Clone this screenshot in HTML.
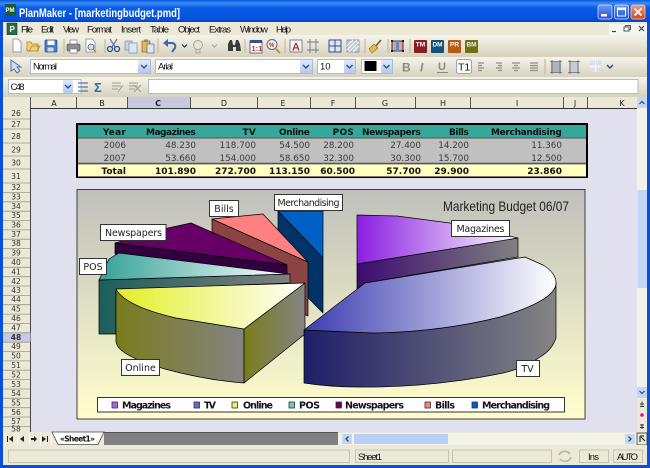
<!DOCTYPE html>
<html><head><meta charset="utf-8"><title>PlanMaker</title>
<style>
html,body{margin:0;padding:0;background:#0a4fd8}
svg{display:block}
.u{font-family:"Liberation Sans",sans-serif}
.d{font-family:"DejaVu Sans",sans-serif}
.rh{font:7.5px "DejaVu Sans",sans-serif;fill:#333;text-anchor:middle}
.ch{font:8px "DejaVu Sans",sans-serif;fill:#222;text-anchor:middle}
.m{font:9.5px "Liberation Sans",sans-serif;fill:#111}
.tb{font:bold 9px "DejaVu Sans",sans-serif;fill:#111;text-anchor:end}
.tr{font:8.8px "DejaVu Sans",sans-serif;fill:#3a3a3a;text-anchor:end}
.lb{font:9.5px "DejaVu Sans",sans-serif;fill:#222;text-anchor:middle}
.lg{font:bold 9.5px "DejaVu Sans",sans-serif;fill:#111}
.cb{fill:#fff;stroke:#a9bcd8;stroke-width:1}
.in{stroke:#000;stroke-width:.7;stroke-linejoin:round}
</style></head><body>
<svg width="650" height="468" viewBox="0 0 650 468" xmlns="http://www.w3.org/2000/svg">
<defs>
<linearGradient id="title" x1="0" y1="0" x2="0" y2="1"><stop offset="0" stop-color="#0a5ae0"/><stop offset=".15" stop-color="#3a8cf6"/><stop offset=".35" stop-color="#0c5ce6"/><stop offset=".9" stop-color="#0550dc"/><stop offset="1" stop-color="#0340b8"/></linearGradient>
<linearGradient id="bar" x1="0" y1="0" x2="0" y2="1"><stop offset="0" stop-color="#f6f4ea"/><stop offset="1" stop-color="#d6d2be"/></linearGradient>
<linearGradient id="chart" x1="0" y1="0" x2="0" y2="1"><stop offset="0" stop-color="#c0c0bc"/><stop offset="1" stop-color="#ffffcc"/></linearGradient>
<linearGradient id="btn" x1="0" y1="0" x2="0" y2="1"><stop offset="0" stop-color="#6f9cf2"/><stop offset="1" stop-color="#1f50d8"/></linearGradient>
<linearGradient id="cls" x1="0" y1="0" x2="0" y2="1"><stop offset="0" stop-color="#f09a80"/><stop offset="1" stop-color="#d8401c"/></linearGradient>
<linearGradient id="drop" x1="0" y1="0" x2="0" y2="1"><stop offset="0" stop-color="#dfe9fb"/><stop offset="1" stop-color="#b4c9f0"/></linearGradient>
<linearGradient id="g1" x1="0" y1="0" x2="1" y2="0"><stop offset="0" stop-color="#8a1ee0"/><stop offset="1" stop-color="#fff"/></linearGradient>
<linearGradient id="g1s" x1="0" y1="0" x2="1" y2="0"><stop offset="0" stop-color="#3c0a70"/><stop offset="1" stop-color="#808080"/></linearGradient>
<linearGradient id="g2" x1="0" y1="0" x2="1" y2="0"><stop offset="0" stop-color="#3c3cb0"/><stop offset="1" stop-color="#fff"/></linearGradient>
<linearGradient id="g2s" x1="0" y1="0" x2="1" y2="0"><stop offset="0" stop-color="#1e1e68"/><stop offset="1" stop-color="#848484"/></linearGradient>
<linearGradient id="g3" x1="0" y1="0" x2="1" y2="0"><stop offset="0" stop-color="#e4ee28"/><stop offset="1" stop-color="#fff"/></linearGradient>
<linearGradient id="g3s" x1="0" y1="0" x2="1" y2="0"><stop offset="0" stop-color="#7a7c1c"/><stop offset="1" stop-color="#848484"/></linearGradient>
<linearGradient id="g4" x1="0" y1="0" x2="1" y2="0"><stop offset="0" stop-color="#34a298"/><stop offset="1" stop-color="#fff"/></linearGradient>
<linearGradient id="g4s" x1="0" y1="0" x2="1" y2="0"><stop offset="0" stop-color="#1c5e5c"/><stop offset="1" stop-color="#808080"/></linearGradient>
</defs>

<!-- window frame -->
<rect width="650" height="468" fill="#0a4fd8"/>
<rect width="650" height="22" fill="url(#title)"/>
<rect x="3" y="22" width="644" height="443" fill="#ece9d8"/>

<!-- title -->
<rect x="5" y="4" width="11" height="12" fill="#1c5c30"/>
<text x="5.500" y="12" font-family="Liberation Sans" font-weight="bold" font-size="6" fill="#fff">PM</text>
<text x="19" y="17" class="u" font-weight="bold" font-size="12" fill="#fff" textLength="161" lengthAdjust="spacingAndGlyphs">PlanMaker - [marketingbudget.pmd]</text>
<rect x="598" y="5" width="14" height="14" rx="2" fill="url(#btn)" stroke="#dfe8fb" stroke-width=".7"/>
<rect x="601" y="14" width="6" height="2.500" fill="#fff"/>
<rect x="614.500" y="5" width="14" height="14" rx="2" fill="url(#btn)" stroke="#dfe8fb" stroke-width=".7"/>
<rect x="617.500" y="8" width="8" height="8" fill="none" stroke="#fff" stroke-width="1"/><rect x="617.500" y="8" width="8" height="2" fill="#fff"/>
<rect x="631" y="5" width="14" height="14" rx="2" fill="url(#cls)" stroke="#f4dcd0" stroke-width=".7"/>
<path d="M634.500 8.500l7 7m0-7l-7 7" stroke="#fff" stroke-width="1.800"/>

<!-- menu -->
<rect x="3" y="22" width="644" height="13" fill="#ece9d8"/>
<rect x="7" y="23" width="10" height="12" fill="#2a6c44" stroke="#123" stroke-width=".5"/>
<text x="9.500" y="32" class="u" font-weight="bold" font-size="8" fill="#fff">P</text>
<text x="21" y="32.500" class="m" textLength="12">File</text>
<text x="41" y="32.500" class="m" textLength="13">Edit</text>
<text x="63" y="32.500" class="m" textLength="16">View</text>
<text x="87" y="32.500" class="m" textLength="25">Format</text>
<text x="121" y="32.500" class="m" textLength="20">Insert</text>
<text x="150" y="32.500" class="m" textLength="19">Table</text>
<text x="178" y="32.500" class="m" textLength="22">Object</text>
<text x="209" y="32.500" class="m" textLength="22">Extras</text>
<text x="240" y="32.500" class="m" textLength="28">Window</text>
<text x="276" y="32.500" class="m" textLength="15">Help</text>
<rect x="609" y="24" width="38" height="11" fill="#f6f5ee"/>
<path d="M612 31.500h4" stroke="#444" stroke-width="1.200"/>
<path d="M624 27h5v4h-5zM625.500 27v-1.500h5v4h-1.500" fill="none" stroke="#555"/>
<path d="M639 26l5 5m0-5l-5 5" stroke="#444" stroke-width="1.200"/>

<!-- toolbar 1 -->
<rect x="3" y="35" width="644" height="22" fill="url(#bar)"/>
<path d="M13 39h5l3 3v10h-8z" fill="#fff" stroke="#7a8aa8" stroke-width=".8"/>
<path d="M27 51v-9h4l1 2h6v7zM29 51l3-5h8l-3 5z" fill="#f4d070" stroke="#a08030" stroke-width=".7"/>
<rect x="45" y="40" width="12" height="12" rx="1" fill="#4a78c8" stroke="#2a4a90" stroke-width=".7"/><rect x="47.500" y="40.500" width="7" height="4.500" fill="#fff"/><rect x="47.500" y="47.500" width="6" height="4" fill="#d0d8e8"/>
<path d="M64 39v14" stroke="#b8b4a0"/>
<rect x="67" y="44" width="13" height="7" rx="1.500" fill="#8a8e90" stroke="#444" stroke-width=".6"/><rect x="70" y="40" width="7" height="4" fill="#fff" stroke="#666" stroke-width=".6"/><rect x="70" y="49" width="7" height="4" fill="#fff" stroke="#666" stroke-width=".6"/>
<path d="M86 39h6l3 3v10h-9z" fill="#fff" stroke="#7a8aa8" stroke-width=".8"/><circle cx="91" cy="47" r="3" fill="#cfe0f0" stroke="#555" stroke-width=".8"/><path d="M93 49l3 3" stroke="#c09020" stroke-width="1.400"/>
<path d="M105 39v14" stroke="#b8b4a0"/>
<circle cx="110" cy="49" r="2.500" fill="none" stroke="#2a4a90" stroke-width="1.300"/><circle cx="117" cy="49" r="2.500" fill="none" stroke="#2a4a90" stroke-width="1.300"/><path d="M112 47l5-8m-2 8l-5-8" stroke="#6a7a90" stroke-width="1.200"/>
<rect x="125" y="41" width="7" height="9" fill="#c8d4e8" stroke="#7a8aa8" stroke-width=".7"/><rect x="129" y="43" width="8" height="10" fill="#dde6f4" stroke="#7a8aa8" stroke-width=".7"/>
<rect x="142" y="41" width="8" height="11" fill="#e4b850" stroke="#8a6a20" stroke-width=".7"/><rect x="144" y="39.500" width="4" height="2.500" fill="#888"/><rect x="147" y="44" width="7" height="9" fill="#dde6f4" stroke="#5a6a90" stroke-width=".7"/>
<path d="M158 39v14" stroke="#b8b4a0"/>
<path d="M165 43h7a3.500 3.500 0 0 1 3 5l-3 4" fill="none" stroke="#3a68b0" stroke-width="2"/><path d="M168 39l-5 4 5 4z" fill="#3a68b0"/>
<path d="M182 44.500l2.500 2.500 2.500-2.500" fill="none" stroke="#234" stroke-width="1.200"/>
<circle cx="198" cy="45" r="4.500" fill="#e8e6d6" stroke="#a8a694"/><path d="M196 49v4h4v-4" fill="none" stroke="#a8a694"/>
<path d="M212 44.500l2.500 2.500 2.500-2.500" fill="none" stroke="#b0ae9c" stroke-width="1.200"/>
<path d="M228 44l2-4h2l1 5h2l1-5h2l2 4 1 7h-5v-4h-3v4h-5z" fill="#3a3a3a"/>
<path d="M245 39v14" stroke="#b8b4a0"/>
<rect x="250" y="41" width="12" height="12" fill="#fff" stroke="#33528c" stroke-width=".8"/><rect x="250" y="40" width="12" height="3" fill="#33528c"/><text x="251.500" y="51" class="u" font-weight="bold" font-size="7.500" fill="#c03020">1:1</text>
<circle cx="272" cy="44.500" r="5" fill="#e8eef6" stroke="#606878"/><text x="269" y="47" class="u" font-size="6" font-weight="bold" fill="#c03020">%</text><path d="M276 49l4 4" stroke="#b09030" stroke-width="1.800"/>
<path d="M285 39v14" stroke="#b8b4a0"/>
<rect x="290" y="40" width="12" height="12" fill="#f8f8f8" stroke="#5a6a90" stroke-width=".8"/><text x="292" y="50.500" class="u" font-weight="bold" font-size="11" fill="#c82828">A</text>
<path d="M310 39v14M316 39v14M307 42h12M307 50h12" stroke="#6a7a90" stroke-width=".9"/>
<rect x="329" y="40" width="12" height="12" fill="#dfe6f2" stroke="#33528c"/><path d="M335 40v12M329 46h12" stroke="#33528c"/>
<rect x="347" y="40" width="12" height="12" fill="#c0cce0" stroke="#7a8ab0" stroke-width=".8"/><path d="M347 46l6-6m-6 10l10-10m-8 12l10-10m-6 10l6-6" stroke="#fff" stroke-width=".9"/>
<path d="M365 39v14" stroke="#b8b4a0"/>
<path d="M381 40l-6 7" stroke="#7a5a20" stroke-width="1.600"/><path d="M374 44l-5 5 3 4 6-5z" fill="#e8b840" stroke="#8a6a20" stroke-width=".6"/>
<path d="M388 39v14" stroke="#b8b4a0"/>
<rect x="392" y="41" width="11" height="10" fill="#d8a0a0" stroke="#333"/><rect x="396" y="41" width="3" height="10" fill="#6a88c0"/><path d="M391 40h2v2h-2zM402 40h2v2h-2zM391 50h2v2h-2zM402 50h2v2h-2z" fill="#222"/>
<path d="M410 39v14" stroke="#b8b4a0"/>
<rect x="414" y="40" width="13" height="13" rx="1" fill="#8c1c24"/><rect x="431" y="40" width="13" height="13" rx="1" fill="#14507c"/><rect x="448" y="40" width="13" height="13" rx="1" fill="#b85a14"/><rect x="465" y="40" width="13" height="13" rx="1" fill="#6e7010"/>
<g class="u" font-weight="bold" font-size="6.500" fill="#fff" text-anchor="middle"><text x="420.500" y="46.500">TM</text><text x="437.500" y="46.500">DM</text><text x="454.500" y="46.500">PR</text><text x="471.500" y="46.500" fill="#eee">BM</text></g>

<!-- toolbar 2 -->
<rect x="3" y="57" width="644" height="20" fill="url(#bar)"/>
<path d="M11 60l0 11 3-2 3 4 3-2-3-4h4z" fill="#cfe0f6" stroke="#4a6a9a" stroke-width=".9"/>
<rect class="cb" x="30.500" y="59.500" width="120" height="14"/><rect x="138" y="60" width="12" height="13" rx="1" fill="url(#drop)"/><path d="M141 65l3 3 3-3" fill="none" stroke="#2a4a80" stroke-width="1.300"/>
<text x="33" y="69.500" class="m" textLength="24">Normal</text>
<rect class="cb" x="155.500" y="59.500" width="157" height="14"/><rect x="300" y="60" width="12" height="13" rx="1" fill="url(#drop)"/><path d="M303 65l3 3 3-3" fill="none" stroke="#2a4a80" stroke-width="1.300"/>
<text x="158" y="69.500" class="m" textLength="15">Arial</text>
<rect class="cb" x="317.500" y="59.500" width="38" height="14"/><rect x="344" y="60" width="11" height="13" rx="1" fill="url(#drop)"/><path d="M346.500 65l3 3 3-3" fill="none" stroke="#2a4a80" stroke-width="1.300"/>
<text x="320" y="69.500" class="m">10</text>
<rect class="cb" x="361.500" y="59.500" width="31" height="14"/><rect x="364.500" y="61" width="12" height="10" fill="#000"/><rect x="381" y="60" width="11" height="13" rx="1" fill="url(#drop)"/><path d="M383.500 65l3 3 3-3" fill="none" stroke="#2a4a80" stroke-width="1.300"/>
<text x="402" y="71.500" class="u" font-weight="bold" font-size="12" fill="#8a8a80">B</text>
<text x="420" y="71.500" class="u" font-style="italic" font-weight="bold" font-size="12" fill="#8a8a80">I</text>
<text x="438" y="70" class="u" font-weight="bold" font-size="11" fill="#8a8a80">U</text><path d="M437 72.500h11" stroke="#8a8a80"/>
<rect x="456.500" y="59.500" width="15" height="14" rx="2" fill="#fafaf4" stroke="#8fa8cc"/>
<text x="458" y="70.500" class="u" font-size="10.500" fill="#222">T1</text>
<g stroke="#8f8f86" stroke-width="1.300"><path d="M478 63h6M478 65.500h4M478 68h6M478 70.500h4"/><path d="M496 63h6M498 65.500h4M496 68h6M498 70.500h4"/><path d="M512 63h8M514 65.500h4M512 68h8M514 70.500h4"/><path d="M530 63h8M530 65.500h8M530 68h8M530 70.500h8"/></g>
<path d="M545 59v15" stroke="#b8b4a0"/>
<rect x="551" y="62" width="10" height="10" fill="#b0b4bc"/><path d="M550 61.500h12M550 72.500h12M552 60v14M560 60v14" stroke="#5a6680" stroke-width=".8"/>
<rect x="569" y="62" width="10" height="10" fill="#c8ccd0"/><path d="M568 61.500h12M568 72.500h12M570 60v14M578 60v14" stroke="#5a6680" stroke-width=".8"/>
<rect x="590" y="61" width="11" height="11" fill="#d8e0ee"/><path d="M595.500 61v11M590 66.500h11" stroke="#fff"/>
<path d="M607 65l3 3 3-3" fill="none" stroke="#2a4a80" stroke-width="1.400"/>

<!-- formula bar -->
<rect x="3" y="77" width="644" height="20" fill="url(#bar)"/>
<rect class="cb" x="8.500" y="79.500" width="72.500" height="14"/><rect x="63" y="80" width="10" height="13" rx="1" fill="url(#drop)"/><path d="M65 85l3 3 3-3" fill="none" stroke="#2a4a80" stroke-width="1.300"/>
<text x="10.500" y="90" class="m" textLength="14">C48</text>
<path d="M78 83h10M78 87h10M78 91h10" stroke="#5a78a8" stroke-width="1.300"/>
<text x="94" y="92" class="u" font-weight="bold" font-size="13" fill="#3a68b0">Σ</text>
<path d="M112 83h9M112 86h9M112 89h6M118 92l5-7" stroke="#a09e90" stroke-width="1"/>
<path d="M129 83h9M129 86h9M129 89h6M134 85l7 7m0-7l-7 7" stroke="#a09e90" stroke-width="1"/>
<rect class="cb" x="148.500" y="79.500" width="489.500" height="14"/>

<!-- column headers -->
<rect x="3" y="97" width="634" height="11" fill="#ebe8d6"/>
<rect x="127" y="97" width="63" height="11" fill="#c8c8e0"/>
<path d="M3 108.500h634" stroke="#333"/>
<g stroke="#555" stroke-width="1"><path d="M30.500 97v11M76.500 97v11M127.500 97v11M190.500 97v11M257.500 97v11M310.500 97v11M355.500 97v11M415.500 97v11M470.500 97v11M563.500 97v11M587.500 97v11"/></g>
<g class="ch"><text x="54" y="106">A</text><text x="102" y="106">B</text><text x="158" y="106" font-weight="bold">C</text><text x="224" y="106">D</text><text x="283" y="106">E</text><text x="333" y="106">F</text><text x="385" y="106">G</text><text x="443" y="106">H</text><text x="517" y="106">I</text><text x="575" y="106">J</text><text x="622" y="106">K</text></g>

<!-- sheet -->
<rect x="31" y="109" width="606" height="323" fill="#e0e0ef"/>

<!-- row headers -->
<rect x="3" y="108" width="27.500" height="324" fill="#ebe8d6"/>
<path d="M30.500 108v324" stroke="#444"/>
<rect x="3" y="332.500" width="27.500" height="9.500" fill="#c8c8e0"/>
<g stroke="#9a9888" stroke-width=".8"><path d="M3 119h27M3 129h27M3 143h27M3 156h27M3 169h27M3 183h27M3 192.500h27M3 201.800h27M3 211.200h27M3 220.500h27M3 229.900h27M3 239.200h27M3 248.600h27M3 258h27M3 267.300h27M3 276.700h27M3 286h27M3 295.400h27M3 304.700h27M3 314.100h27M3 323.500h27M3 332.800h27M3 342.200h27M3 351.500h27M3 360.900h27M3 370.200h27M3 379.600h27M3 389h27M3 398.300h27M3 407.700h27M3 417h27M3 426.400h27"/></g>
<g class="rh"><text x="16" y="116">26</text><text x="16" y="127">27</text><text x="16" y="139">28</text><text x="16" y="152.500">29</text><text x="16" y="165.500">30</text><text x="16" y="179">31</text><text x="16" y="190">32</text><text x="16" y="199.500">33</text><text x="16" y="209">34</text><text x="16" y="218">35</text><text x="16" y="227.500">36</text><text x="16" y="237">37</text><text x="16" y="246">38</text><text x="16" y="255.500">39</text><text x="16" y="265">40</text><text x="16" y="274.500">41</text><text x="16" y="284">42</text><text x="16" y="293">43</text><text x="16" y="302">44</text><text x="16" y="311.500">45</text><text x="16" y="321">46</text><text x="16" y="330.500">47</text><text x="16" y="340" font-weight="bold">48</text><text x="16" y="349">49</text><text x="16" y="358.500">50</text><text x="16" y="368">51</text><text x="16" y="377.500">52</text><text x="16" y="387">53</text><text x="16" y="396">54</text><text x="16" y="405.500">55</text><text x="16" y="415">56</text><text x="16" y="424">57</text><text x="16" y="431.500">58</text></g>

<!-- table -->
<rect x="77" y="124" width="510" height="53" fill="#c0c0c0" stroke="#000" stroke-width="2"/>
<rect x="78" y="125" width="508" height="13" fill="#36a79b"/>
<path d="M78 138h508" stroke="#555"/>
<path d="M78 163.500h508" stroke="#555" stroke-width="1.500"/>
<rect x="78" y="164.500" width="508" height="12" fill="#ffffc0"/>
<g class="tb" letter-spacing=".2"><text x="126" y="135">Year</text><text x="196" y="135" textLength="50">Magazines</text><text x="256" y="135">TV</text><text x="310" y="135" textLength="31">Online</text><text x="354" y="135">POS</text><text x="421" y="135" textLength="59">Newspapers</text><text x="469" y="135" textLength="20">Bills</text><text x="562" y="135" textLength="71">Merchandising</text></g>
<g class="tr"><text x="126" y="148">2006</text><text x="196" y="148">48.230</text><text x="256" y="148">118.700</text><text x="310" y="148">54.500</text><text x="354" y="148">28.200</text><text x="421" y="148">27.400</text><text x="469" y="148">14.200</text><text x="562" y="148">11.360</text></g>
<g class="tr"><text x="126" y="161">2007</text><text x="196" y="161">53.660</text><text x="256" y="161">154.000</text><text x="310" y="161">58.650</text><text x="354" y="161">32.300</text><text x="421" y="161">30.300</text><text x="469" y="161">15.700</text><text x="562" y="161">12.500</text></g>
<g class="tb"><text x="126" y="174">Total</text><text x="196" y="174">101.890</text><text x="256" y="174">272.700</text><text x="310" y="174">113.150</text><text x="355" y="174">60.500</text><text x="421" y="174">57.700</text><text x="469" y="174">29.900</text><text x="562" y="174">23.860</text></g>

<!-- chart -->
<rect x="77" y="189.500" width="508" height="229.500" fill="url(#chart)" stroke="#404040" stroke-width="1"/>
<text x="443" y="211" class="u" font-size="14" fill="#222" textLength="126" lengthAdjust="spacingAndGlyphs">Marketing Budget 06/07</text>

<!-- Merchandising -->
<path class="in" d="M278 211L323 258V313L278 267z" fill="#003468"/>
<path class="in" d="M278 211H323V258z" fill="#0060c4"/>
<!-- Bills -->
<path class="in" d="M212 219L308 262V316L212 272z" fill="#8b4343"/>
<path class="in" d="M212 219L263 214L308 262z" fill="#ff8080"/>
<!-- Newspapers -->
<path class="in" d="M115 243L287 265V276L115 254z" fill="#33003f"/>
<path class="in" d="M115 243L168 228L191 223L287 265z" fill="#660066"/>
<!-- POS -->
<path class="in" d="M99 280L290 274V283L116 290V334H99z" fill="url(#g4s)"/>
<path class="in" d="M99 280L109 259L119 253L289 274z" fill="url(#g4)"/>
<!-- Online -->
<path class="in" d="M116 289Q125 306 176 318L244 329V383Q205 380 165 369Q116 355 116 341z" fill="url(#g3s)"/>
<path class="in" d="M244 329L305 283V334L244 383z" fill="url(#g3s)"/>
<path class="in" d="M116 289L305 283L244 329L176 318Q125 306 116 289z" fill="url(#g3)"/>
<!-- Magazines -->
<path class="in" d="M357 264L518 238V257L365 283L357 289z" fill="url(#g1s)"/>
<path class="in" d="M357 215L397 216L450 223L518 238L357 264z" fill="url(#g1)"/>
<!-- TV -->
<path class="in" d="M304 330L373 333Q440 332 500 317Q556 300 556 283V338Q552 350 540 357Q525 368 503 373Q430 388 357 387Q330 387 304 383z" fill="url(#g2s)"/>
<path class="in" d="M304 330L365 283L525 257L543 265Q556 273 556 283Q556 300 500 317Q440 332 373 333z" fill="url(#g2)"/>

<!-- labels -->
<g fill="#fff" stroke="#333" stroke-width="1">
<rect x="274.500" y="194.500" width="68" height="16"/>
<rect x="209.500" y="200.500" width="29" height="16"/>
<rect x="100.500" y="224.500" width="65.500" height="16"/>
<rect x="79.500" y="258.500" width="27" height="16"/>
<rect x="121.500" y="359.500" width="38" height="16"/>
<rect x="516.500" y="360.500" width="23" height="16"/>
<rect x="451.500" y="220.500" width="58" height="16"/>
</g>
<g class="lb"><text x="308.500" y="206" textLength="62">Merchandising</text><text x="224" y="212">Bills</text><text x="133.500" y="236" textLength="57">Newspapers</text><text x="93" y="270">POS</text><text x="140.500" y="371">Online</text><text x="527.500" y="372">TV</text><text x="480.500" y="232" textLength="48">Magazines</text></g>

<!-- legend -->
<rect x="97.500" y="397.500" width="467" height="14.500" fill="#fff" stroke="#333"/>
<g stroke="#333" stroke-width=".8"><rect x="112" y="402" width="5.500" height="6" fill="#b060e8"/><rect x="194" y="402" width="5.500" height="6" fill="#6868c8"/><rect x="232" y="402" width="5.500" height="6" fill="#eef060"/><rect x="289" y="402" width="5.500" height="6" fill="#70c8c0"/><rect x="336" y="402" width="5.500" height="6" fill="#660066"/><rect x="425" y="402" width="5.500" height="6" fill="#ff8080"/><rect x="472" y="402" width="5.500" height="6" fill="#0060c4"/></g>
<g class="lg"><text x="122" y="408.500" textLength="49">Magazines</text><text x="204" y="408.500" textLength="12">TV</text><text x="243" y="408.500" textLength="30">Online</text><text x="299" y="408.500" textLength="21">POS</text><text x="345" y="408.500" textLength="59">Newspapers</text><text x="435" y="408.500" textLength="20">Bills</text><text x="482" y="408.500" textLength="68">Merchandising</text></g>

<!-- vertical scrollbar -->
<rect x="637" y="97" width="10" height="336" fill="#f3f2ea"/>
<rect x="637" y="97" width="10" height="11" fill="#c4d6f6"/>
<path d="M639.500 104l2.500-2.500 2.500 2.500" fill="none" stroke="#2a4a80" stroke-width="1.200"/>
<rect x="637.500" y="190" width="9.500" height="98" fill="#c4d6f6"/>
<rect x="637" y="387" width="10" height="11" fill="#c4d6f6"/>
<path d="M639.500 391l2.500 2.500 2.500-2.500" fill="none" stroke="#2a4a80" stroke-width="1.200"/>
<rect x="637" y="399" width="10" height="33" fill="#ece9d8"/>
<path d="M640 404h4M640 406.500h4M642 401.500v4" stroke="#333" stroke-width=".9"/>
<circle cx="642" cy="415" r="1.800" fill="#e01090"/>
<path d="M640 425h4M640 427.500h4M642 424v5" stroke="#333" stroke-width=".9"/>

<!-- tabs -->
<rect x="3" y="432" width="644" height="13" fill="#ece9d8"/>
<rect x="104" y="433" width="234" height="12" fill="#808080"/>
<path d="M104 432.500h234" stroke="#555"/>
<g fill="#222"><path d="M7 436v6h1v-6zM13 436l-4 3 4 3z"/><path d="M24 436l-4 3 4 3z"/><path d="M31 438h3v-2l3 3-3 3v-2h-3z"/><path d="M42 436l4 3-4 3zM47 436h1v6h-1z"/></g>
<path d="M5.500 433v12M17.500 433v12M29.500 433v12M40.500 433v12M51.500 433v12" stroke="#fff" stroke-width=".8"/>
<path d="M52 432L58 444.500H98L104 432z" fill="#fff" stroke="#444" stroke-width=".8"/>
<text x="60" y="441.500" class="d" font-weight="bold" font-size="7.500" fill="#111" textLength="35">«Sheet1»</text>

<!-- hscroll -->
<rect x="338" y="433" width="299" height="12" fill="#f3f2ea"/>
<rect x="342" y="434" width="10" height="10" fill="#c4d6f6"/><path d="M348.500 436.500l-2.500 2.500 2.500 2.500" fill="none" stroke="#2a4a80" stroke-width="1.300"/>
<rect x="354" y="434" width="94" height="10" fill="#b8d0f8"/>
<rect x="625" y="434" width="10" height="10" fill="#c4d6f6"/><path d="M628.500 436.500l2.500 2.500-2.500 2.500" fill="none" stroke="#2a4a80" stroke-width="1.300"/>
<rect x="637" y="433" width="10" height="12" fill="#ece9d8" stroke="#333" stroke-width=".8"/>
<path d="M640 436v6M640 436h4M641 437l4 4" stroke="#111" stroke-width="1"/>

<!-- status bar -->
<rect x="3" y="445" width="644" height="20" fill="#ece9d8"/>
<g fill="#ece9d8" stroke="#c4c2b0" stroke-width="1">
<rect x="8.500" y="450" width="341" height="12.500"/>
<rect x="355.500" y="450" width="93" height="12.500"/>
<rect x="452.500" y="450" width="99" height="12.500"/>
<rect x="579.500" y="450" width="29" height="12.500"/>
<rect x="613.500" y="450" width="29" height="12.500"/>
</g>
<text x="358" y="460" class="m" textLength="24">Sheet1</text>
<text x="588" y="460" class="m" textLength="11">Ins</text>
<text x="617" y="460" class="m" textLength="21">AUTO</text>
<path d="M559 455a6 5 0 0 1 11-1M571 457a6 5 0 0 1-11 2" fill="none" stroke="#bcbaa8" stroke-width="1.800"/>
</svg>
</body></html>
